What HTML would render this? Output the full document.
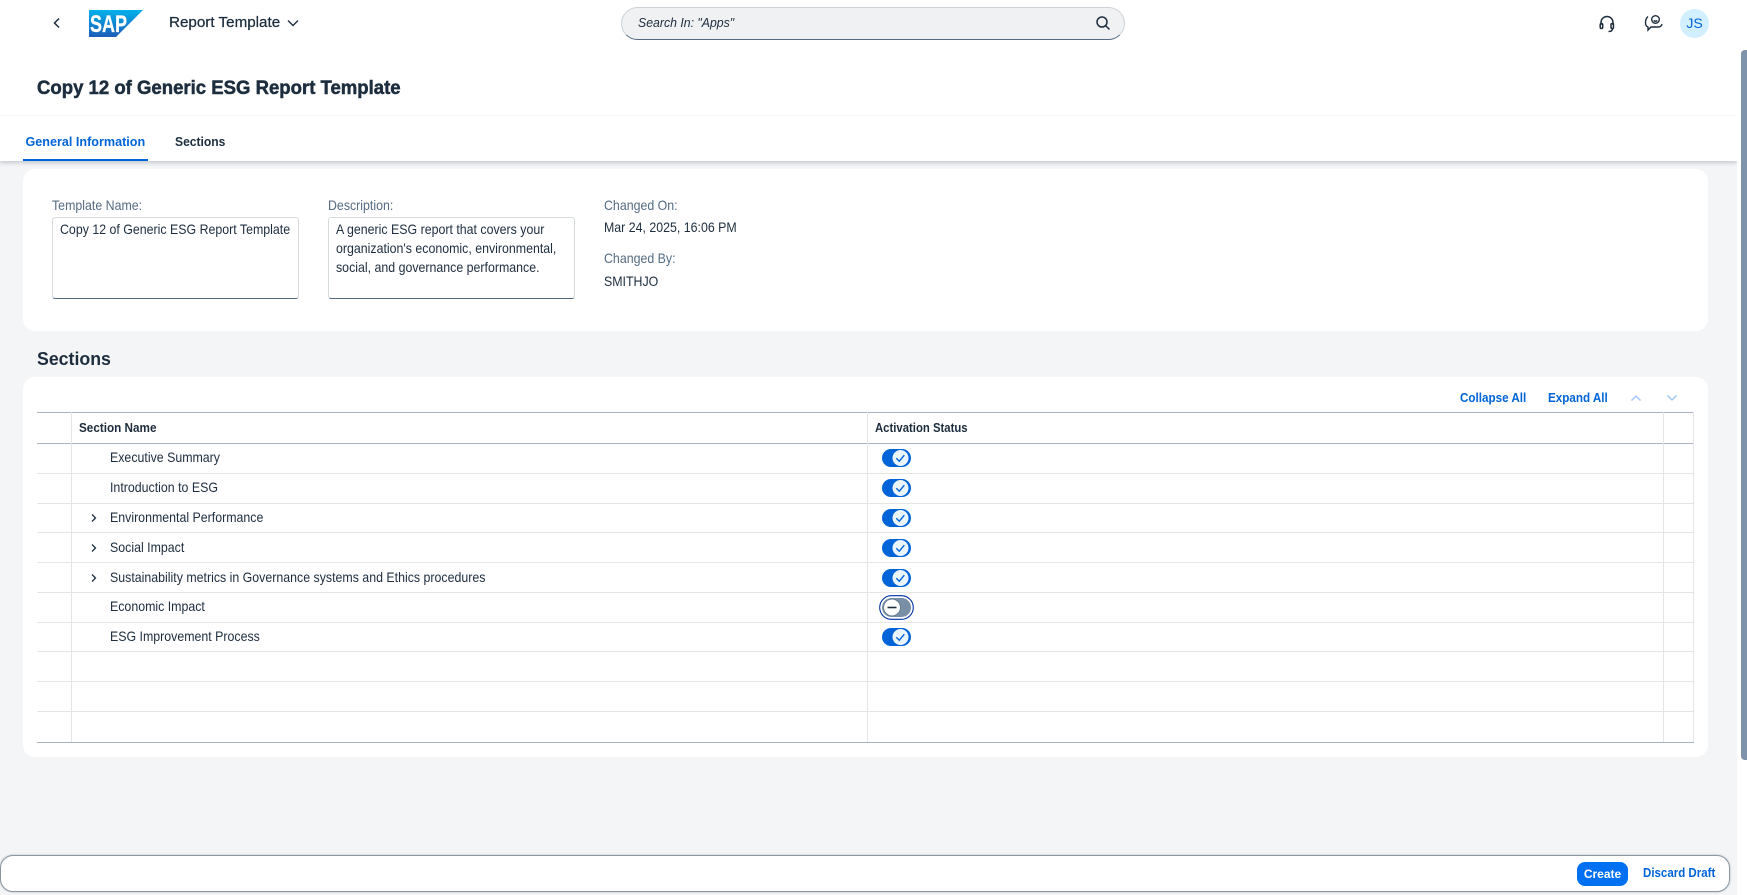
<!DOCTYPE html>
<html lang="en"><head><meta charset="utf-8"><title>Report Template</title>
<style>
*{box-sizing:border-box}
html,body{margin:0;padding:0;width:1747px;height:895px;overflow:hidden;background:#fff;font-family:"Liberation Sans",sans-serif;color:#1d2d3e}
#pg{position:absolute;left:0;top:0;width:1747px;height:895px;filter:blur(.3px)}
.a{position:absolute}
.t{position:absolute;white-space:nowrap;line-height:20px;font-size:13.6px;transform-origin:left center;transform:scaleX(.91)}
.l{color:#556b82}
.b{font-weight:bold}
.lnk{color:#0064d9;font-weight:bold;font-size:12.6px;transform:scaleX(.925)}
.hd{font-size:12.6px;font-weight:bold;transform:scaleX(.915)}
.h{position:absolute;left:37px;width:1657px;height:1px;background:#e5e5e5}
.v{position:absolute;width:1px;background:#e5e5e5;top:412px;height:330px}
.box{position:absolute;background:#fff;border:1px solid #d5dadd;border-bottom:1.5px solid #556b82;border-radius:3px}
.tg{position:absolute;left:882px;width:29px;height:18px}
svg{display:block}
</style></head><body><div id="pg">
<div class="a" style="left:0;top:161px;width:1737px;height:734px;background:#f4f5f7"></div>
<div class="a" style="left:0;top:0;width:1737px;height:161px;background:#fff;box-shadow:0 2px 4px rgba(29,45,62,.22)"></div>
<div class="a" style="left:0;top:115px;width:1737px;height:1px;background:#f7f8f9"></div>
<div class="a" style="left:1737px;top:0;width:10px;height:895px;background:#fff"></div>
<div class="a" style="left:1741px;top:50px;width:6px;height:710px;background:#7f93aa;border-radius:4px 0 0 4px"></div>

<svg class="a" style="left:50px;top:16px" width="14" height="14" viewBox="0 0 14 14"><path d="M9 2.500 4.500 7 9 11.500" fill="none" stroke="#1d2d3e" stroke-width="1.500"/></svg>
<svg class="a" style="left:89px;top:10px" width="54" height="27" viewBox="0 0 54 27"><defs><linearGradient id="g" x1="0" y1="0" x2="0" y2="1"><stop offset="0" stop-color="#00b1eb"/><stop offset="1" stop-color="#1e5cb8"/></linearGradient></defs><polygon points="0,0 54,0 27,27 0,27" fill="url(#g)"/><text x="1" y="22" font-family="Liberation Sans" font-weight="bold" font-size="24" fill="#fff" stroke="#fff" stroke-width=".3" textLength="37" lengthAdjust="spacingAndGlyphs">SAP</text></svg>
<div class="t" style="left:169px;top:13px;font-size:15.2px;color:#1d2d3e;-webkit-text-stroke:.25px #1d2d3e;transform:none">Report Template</div>
<svg class="a" style="left:286px;top:17px" width="14" height="12" viewBox="0 0 14 12"><path d="M2 3.500 7 8.500 12 3.500" fill="none" stroke="#1d2d3e" stroke-width="1.400"/></svg>

<div class="a" style="left:621px;top:7px;width:504px;height:33px;background:#eff1f3;border:1px solid #cdd2d7;border-bottom:1.5px solid #556b82;border-radius:17px"></div>
<div class="t" style="left:638px;top:13px;font-style:italic;font-size:13px;transform:scaleX(.945)">Search In: "Apps"</div>
<svg class="a" style="left:1095px;top:15px" width="16" height="16" viewBox="0 0 16 16"><circle cx="7" cy="7" r="5" fill="none" stroke="#1d2d3e" stroke-width="1.500"/><path d="M10.500 10.500 14.500 14.500" stroke="#1d2d3e" stroke-width="1.500"/></svg>

<svg class="a" style="left:1598px;top:15px" width="18" height="18" viewBox="0 0 18 18" fill="none" stroke="#1d2d3e" stroke-width="1.500"><path d="M3 10V7.500a6 6 0 0 1 12 0V10"/><rect x="2.200" y="8.500" width="2.500" height="5" rx="1.200"/><rect x="13" y="8.500" width="2.500" height="5" rx="1.200"/><path d="M14.500 13.500c0 2-1.500 3-4 3"/></svg>
<svg class="a" style="left:1644px;top:14px" width="19" height="18" viewBox="0 0 19 18" fill="none" stroke="#1d2d3e" stroke-width="1.400"><circle cx="11.500" cy="5.500" r="3.800"/><path d="M9.700 6.500c1 1 2.600 1 3.600 0"/><path d="M4 2.500C2.300 4 1.500 6 1.500 8.500c0 2.500 1 4 2.500 4.500v3l3-3h7c2 0 3.500-.7 4-3"/></svg>
<div class="a" style="left:1680px;top:9px;width:29px;height:29px;border-radius:50%;background:#d1efff;color:#0064d9;font-size:14px;line-height:29px;text-align:center">JS</div>

<div class="t b" style="left:37px;top:79px;font-size:19.2px;color:#1d2d3e;-webkit-text-stroke:.5px #1d2d3e;transform:scaleX(.967)">Copy 12 of Generic ESG Report Template</div>
<div class="t b" style="left:25.500px;top:132px;font-size:12.600px;color:#0064d9;transform:none">General Information</div>
<div class="t b" style="left:174.500px;top:132px;font-size:12.600px;transform:scaleX(.96)">Sections</div>
<div class="a" style="left:23px;top:159px;width:125px;height:2px;background:#0064d9"></div>

<div class="a" style="left:23px;top:169px;width:1685px;height:162px;background:#fff;border-radius:12px"></div>
<div class="t l" style="left:52px;top:196px">Template Name:</div>
<div class="box" style="left:52px;top:217px;width:247px;height:82px"></div>
<div class="t" style="left:60px;top:220px">Copy 12 of Generic ESG Report Template</div>
<div class="t l" style="left:328px;top:196px">Description:</div>
<div class="box" style="left:328px;top:217px;width:247px;height:82px"></div>
<div class="t" style="left:336px;top:220px">A generic ESG report that covers your</div>
<div class="t" style="left:336px;top:239px">organization's economic, environmental,</div>
<div class="t" style="left:336px;top:258px">social, and governance performance.</div>
<div class="t l" style="left:604px;top:196px">Changed On:</div>
<div class="t" style="left:604px;top:218px">Mar 24, 2025, 16:06 PM</div>
<div class="t l" style="left:604px;top:249px">Changed By:</div>
<div class="t" style="left:604px;top:272px">SMITHJO</div>

<div class="t b" style="left:37px;top:349px;font-size:18px;transform:scaleX(.985)">Sections</div>

<div class="a" style="left:23px;top:377px;width:1685px;height:380px;background:#fff;border-radius:12px"></div>
<div class="t lnk" style="left:1460px;top:388px">Collapse All</div>
<div class="t lnk" style="left:1548px;top:388px">Expand All</div>
<svg class="a" style="left:1629px;top:393px" width="14" height="10" viewBox="0 0 14 10"><path d="M2.500 7.500 7 3 11.500 7.500" fill="none" stroke="#9cc4f5" stroke-width="1.300"/></svg>
<svg class="a" style="left:1665px;top:393px" width="14" height="10" viewBox="0 0 14 10"><path d="M2.500 2.500 7 7 11.500 2.500" fill="none" stroke="#9cc4f5" stroke-width="1.300"/></svg>

<div class="h" style="top:412px;background:#a9b4be"></div>
<div class="h" style="top:443px;background:#a9b4be"></div>
<div class="h" style="top:473px"></div><div class="h" style="top:503px"></div><div class="h" style="top:532px"></div><div class="h" style="top:562px"></div><div class="h" style="top:592px"></div><div class="h" style="top:622px"></div><div class="h" style="top:651px"></div><div class="h" style="top:681px"></div><div class="h" style="top:711px"></div>
<div class="h" style="top:742px;background:#a9b4be"></div>
<div class="v" style="left:71px"></div><div class="v" style="left:867px"></div><div class="v" style="left:1663px"></div><div class="v" style="left:1693px"></div>

<div class="t hd" style="left:79px;top:418px;transform:scaleX(.93)">Section Name</div>
<div class="t hd" style="left:875px;top:418px;transform:scaleX(.9)">Activation Status</div>
<div class="t" style="left:110px;top:448px">Executive Summary</div>
<div class="t" style="left:110px;top:478px">Introduction to ESG</div>
<div class="t" style="left:110px;top:508px">Environmental Performance</div>
<div class="t" style="left:110px;top:538px">Social Impact</div>
<div class="t" style="left:110px;top:568px">Sustainability metrics in Governance systems and Ethics procedures</div>
<div class="t" style="left:110px;top:597px">Economic Impact</div>
<div class="t" style="left:110px;top:627px">ESG Improvement Process</div>

<svg class="a" style="left:90px;top:513px" width="8" height="10" viewBox="0 0 8 10"><path d="M2 1.500 5.500 5 2 8.500" fill="none" stroke="#1d2d3e" stroke-width="1.300"/></svg>
<svg class="a" style="left:90px;top:543px" width="8" height="10" viewBox="0 0 8 10"><path d="M2 1.500 5.500 5 2 8.500" fill="none" stroke="#1d2d3e" stroke-width="1.300"/></svg>
<svg class="a" style="left:90px;top:573px" width="8" height="10" viewBox="0 0 8 10"><path d="M2 1.500 5.500 5 2 8.500" fill="none" stroke="#1d2d3e" stroke-width="1.300"/></svg>

<svg class="tg" style="top:449px" viewBox="0 0 29 18"><rect width="29" height="18" rx="9" fill="#0064d9"/><circle cx="18.500" cy="9" r="8" fill="#ebf5fe"/><path d="M14.300 9.200l3 3 5-6" fill="none" stroke="#0064d9" stroke-width="1.400"/></svg>
<svg class="tg" style="top:479px" viewBox="0 0 29 18"><rect width="29" height="18" rx="9" fill="#0064d9"/><circle cx="18.500" cy="9" r="8" fill="#ebf5fe"/><path d="M14.300 9.200l3 3 5-6" fill="none" stroke="#0064d9" stroke-width="1.400"/></svg>
<svg class="tg" style="top:509px" viewBox="0 0 29 18"><rect width="29" height="18" rx="9" fill="#0064d9"/><circle cx="18.500" cy="9" r="8" fill="#ebf5fe"/><path d="M14.300 9.200l3 3 5-6" fill="none" stroke="#0064d9" stroke-width="1.400"/></svg>
<svg class="tg" style="top:539px" viewBox="0 0 29 18"><rect width="29" height="18" rx="9" fill="#0064d9"/><circle cx="18.500" cy="9" r="8" fill="#ebf5fe"/><path d="M14.300 9.200l3 3 5-6" fill="none" stroke="#0064d9" stroke-width="1.400"/></svg>
<svg class="tg" style="top:569px" viewBox="0 0 29 18"><rect width="29" height="18" rx="9" fill="#0064d9"/><circle cx="18.500" cy="9" r="8" fill="#ebf5fe"/><path d="M14.300 9.200l3 3 5-6" fill="none" stroke="#0064d9" stroke-width="1.400"/></svg>
<svg class="tg" style="top:628px" viewBox="0 0 29 18"><rect width="29" height="18" rx="9" fill="#0064d9"/><circle cx="18.500" cy="9" r="8" fill="#ebf5fe"/><path d="M14.300 9.200l3 3 5-6" fill="none" stroke="#0064d9" stroke-width="1.400"/></svg>
<svg class="a" style="left:879px;top:595px" width="35" height="25" viewBox="0 0 35 25"><rect x=".7" y=".7" width="33.600" height="23.600" rx="11.800" fill="#fff" stroke="#0032a5" stroke-width="1.100"/><rect x="3" y="3" width="29" height="19" rx="9.500" fill="#788fa6"/><circle cx="13" cy="12.500" r="8.300" fill="#fff" stroke="#556b82" stroke-width=".6"/><path d="M8.500 12.500h9" stroke="#1d2d3e" stroke-width="1.600"/></svg>

<div class="a" style="left:0;top:855px;width:1730px;height:37px;background:#fff;border:1px solid #8a97a3;border-bottom:1.5px solid #8a97a3;border-radius:13px;box-shadow:0 0 2px rgba(29,45,62,.3)"></div>
<div class="a b" style="left:1577px;top:862px;width:51px;height:24px;background:#0070f2;color:#fff;border-radius:8px;text-align:center;font-size:12px;line-height:24px">Create</div>
<div class="t lnk" style="left:1643px;top:863px;transform:scaleX(.914)">Discard Draft</div>
</div></body></html>
